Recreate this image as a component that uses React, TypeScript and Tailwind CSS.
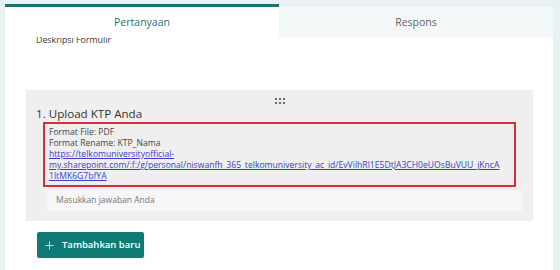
import { Plus } from "lucide-react";

function DragHandle() {
  return (
    <div className="grid grid-cols-3 gap-x-[2px] gap-y-[2px] w-fit mx-auto">
      {[0, 1, 2, 3, 4, 5].map((i) => (
        <span key={i} className="w-[2px] h-[2px] bg-[#6b6b6b]" />
      ))}
    </div>
  );
}

export default function App() {
  return (
    <div
      className="w-[560px] h-[270px] flex overflow-hidden bg-[#e8f1f3]"
      style={{ fontFamily: '"Open Sans", "Noto Sans", sans-serif' }}
    >
      <div className="w-[5px] shrink-0" />
      <div className="w-[548px] flex flex-col">
        <div className="h-[4px] shrink-0" />
        {/* tabs */}
        <div className="flex h-[33px] shrink-0">
          <div className="w-[274px] bg-white border-t-[3px] border-[#1f6f6e] flex items-center justify-center pt-[2px] text-[10.5px] text-[#2a6f78]">
            Pertanyaan
          </div>
          <div className="flex-1 mt-[3px] bg-[#f2f7f8] flex items-center justify-center pt-[1px] text-[10.5px] text-[#666]">
            Respons
          </div>
        </div>
        {/* body */}
        <div className="flex-1 bg-white flex flex-col">
          <div className="h-[9px] overflow-hidden pl-[31px]">
            <div className="-mt-[3px] text-[8.8px] leading-[13px] text-[#3a3a3a]">Deskripsi Formulir</div>
          </div>
          <div className="h-[44px]" />
          <div className="ml-[21px] w-[507px] bg-[#efefef] pt-[8px] pb-[10px]">
            <DragHandle />
            <div className="pl-[10px] mt-[2px] text-[11.6px] leading-[16px] text-[#333]">1. Upload KTP Anda</div>
            <div className="ml-[17px] w-[473px] border-2 border-[#d2303c] pl-[4px] pt-[3px] pb-[3px] text-[8.6px] leading-[11px] text-[#444]">
              <div>Format File: PDF</div>
              <div>Format Rename: KTP_Nama</div>
              <a href="#" className="block text-[#3b3bcf] underline whitespace-nowrap">
                https://telkomuniversityofficial-
                <br />
                my.sharepoint.com/:f:/g/personal/niswanfh_365_telkomuniversity_ac_id/EvVilhRl1E5DtJA3CH0eUOsBuVUU_jKncA
                <br />
                1ltMK6G7bfYA
              </a>
            </div>
            <div className="ml-[21px] mr-[11px] mt-[3px] h-[21px] bg-[#f6f6f6] flex items-center pl-[9px] text-[8.5px] text-[#777]">
              Masukkan jawaban Anda
            </div>
          </div>
          <div className="h-[11px]" />
          <button className="ml-[32px] w-[107px] h-[26px] rounded-[2px] bg-[#0f7a76] text-white flex items-center gap-[6px] pl-[6px] text-[9.5px] font-semibold whitespace-nowrap">
            <Plus size={13} strokeWidth={1.3} />
            Tambahkan baru
          </button>
        </div>
      </div>
      <div className="flex-1" />
    </div>
  );
}
